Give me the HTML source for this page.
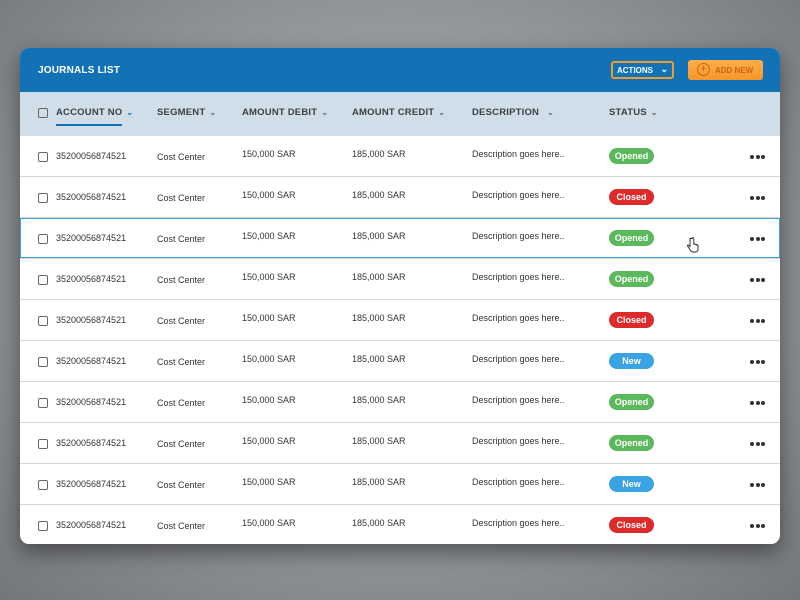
<!DOCTYPE html>
<html><head><style>
*{margin:0;padding:0;box-sizing:border-box}
body{width:800px;height:600px;overflow:hidden;font-family:"Liberation Sans",sans-serif;
background:radial-gradient(ellipse at 50% 45%,#b4b7ba 0%,#9a9da0 45%,#74777a 100%);position:relative}
.card{position:absolute;left:20px;top:48px;width:760px;height:496px;background:#fff;border-radius:9px;overflow:hidden;box-shadow:0 8px 22px rgba(0,0,0,.45)}
.top{position:absolute;left:0;top:0;width:760px;height:44px;background:#1172b5}
.title{position:absolute;left:18px;top:17px;color:#fff;font-weight:bold;font-size:10px;letter-spacing:.2px}
.act{position:absolute;left:591px;top:13px;width:63px;height:18px;border:2px solid #f39a2e;border-radius:3px;color:#fff;font-size:8px;font-weight:bold;padding:3px 0 0 4px}
.act span{position:absolute;right:4px;top:1px;font-size:9px}
.add{position:absolute;left:668px;top:12px;width:75px;height:20px;background:linear-gradient(#ffae4a,#f6952d);border-radius:3px;color:#c8650f;font-size:8px;font-weight:bold;padding:6px 0 0 27px}
.add i{position:absolute;left:9px;top:3px;width:13px;height:13px;border:1.3px solid #c9650f;border-radius:50%;font-style:normal;font-size:11px;line-height:10px;text-align:center;font-weight:normal}
.hd{position:absolute;left:0;top:44px;width:760px;height:44px;background:#d0dee9}
.h{position:absolute;top:15px;font-size:9.5px;font-weight:bold;color:#3b3f44;letter-spacing:.2px}
.h b{font-size:8px;color:#666;margin-left:4px}
.cb{position:absolute;left:18px;width:10px;height:10px;border:1.2px solid #666;border-radius:2px}
.row{position:absolute;left:0;width:760px;height:41px;border-bottom:1px solid #d5d5d5}
.c{position:absolute;top:15px;font-size:9px;color:#333}
.b{position:absolute;left:589px;top:12px;height:16px;width:45px;border-radius:8px;color:#fff;font-size:9px;font-weight:bold;text-align:center;line-height:16px}
.o{background:#5cb85c}.x{background:#de2a2a}.n{background:#3aa3e3}
.d{position:absolute;left:730px;top:19px;width:15px;height:4px}
.d i{position:absolute;top:0;width:4px;height:4px;border-radius:50%;background:#333}
</style></head><body>
<div class="card">
<div class="top"><div class="title">JOURNALS LIST</div>
<div class="act">ACTIONS<span>⌄</span></div>
<div class="add"><i>+</i>ADD NEW</div></div>
<div class="hd">
<div class="cb" style="top:16px"></div>
<div class="h" style="left:36px">ACCOUNT NO<b style="color:#1172b5">⌄</b></div>
<div style="position:absolute;left:36px;top:32px;width:66px;height:1.5px;background:#1172b5"></div>
<div class="h" style="left:137px">SEGMENT<b>⌄</b></div>
<div class="h" style="left:222px">AMOUNT DEBIT<b>⌄</b></div>
<div class="h" style="left:332px">AMOUNT CREDIT<b>⌄</b></div>
<div class="h" style="left:452px">DESCRIPTION<b style="margin-left:8px">⌄</b></div>
<div class="h" style="left:589px">STATUS<b>⌄</b></div>
</div>
<div id="rows"></div>
</div>
<svg style="position:absolute;left:687px;top:237px" width="12" height="16" viewBox="0 0 12 16"><path d="M3 1.5v8l-1.3-1.3c-.6-.6-1.6 0-1 .9L3.5 13.5c.6.9 1.4 1.5 2.5 1.5h2.5c1.6 0 2.5-1.2 2.5-2.7V8.5c0-.9-1.4-.9-1.4 0V8c0-.9-1.4-.9-1.4 0v-.5c0-.9-1.4-.9-1.4 0V1.5c0-1-1.8-1-1.8 0z" fill="#fff" stroke="#222" stroke-width=".9"/></svg>
<script>
var s=['o','x','o','o','x','n','o','o','n','x'],t={o:'Opened',x:'Closed',n:'New'},h='';
for(var i=0;i<10;i++){var y=88+i*41;var st=i==2?'box-shadow:inset 0 0 0 1px #3aa3e3;':'';
h+='<div class="row" style="top:'+y+'px;'+st+'"><div class="cb" style="top:16px"></div><div class="c" style="left:36px">35200056874521</div><div class="c" style="left:137px;top:16px">Cost Center</div><div class="c" style="left:222px;top:13px">150,000 SAR</div><div class="c" style="left:332px;top:13px">185,000 SAR</div><div class="c" style="left:452px;top:13px">Description goes here..</div><div class="b '+s[i]+'">'+t[s[i]]+'</div><div class="d"><i style="left:0"></i><i style="left:5.5px"></i><i style="left:11px"></i></div></div>';}
document.getElementById('rows').innerHTML=h;
</script>
</body></html>
